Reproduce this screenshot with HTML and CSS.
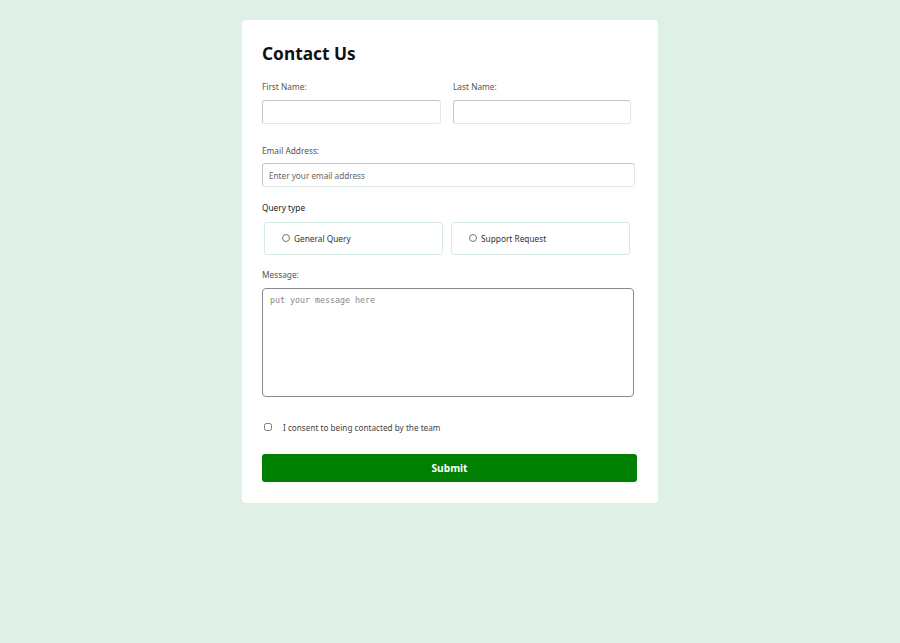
FILE: index.html
```html
<!DOCTYPE html>
<html lang="en">
<head>
    <meta charset="UTF-8">
    <meta name="viewport" content="width=device-width, initial-scale=1.0">
    <title>Contact Us</title>
    <link rel="stylesheet" href="styles.css">
</head>
<body>
    <form class="card" action="#" method="POST">
        <h1>Contact Us</h1>
        <div class="name-row">
            <div class="field">
                <label for="first_name">First Name:</label>
                <input type="text" id="first_name" name="first_name">
            </div>
            <div class="field last">
                <label for="last_name">Last Name:</label>
                <input type="text" id="last_name" name="last_name">
            </div>
        </div>
        <div class="field email">
            <label for="email">Email Address:</label>
            <input type="email" id="email" name="email" placeholder="Enter your email address">
        </div>
        <p class="query-title">Query type</p>
        <div class="query-row">
            <label class="query-box"><input type="radio" name="query"> General Query</label>
            <label class="query-box"><input type="radio" name="query"> Support Request</label>
        </div>
        <div class="field message">
            <label for="message">Message:</label>
            <textarea id="message" name="message" placeholder="put your message here"></textarea>
        </div>
        <label class="consent"><input type="checkbox" name="consent"> I consent to being contacted by the team</label>
        <input type="submit" value="Submit">
    </form>
</body>
</html>
```

FILE: styles.css
```css
body {
    font-family: "Noto Sans", "Open Sans", sans-serif;
    margin: 0;
    padding: 20px 0;
    background-color: #dff0e6;
    color: #222;
}
.card {
    width: 375px;
    margin: 0 auto;
    background-color: #fff;
    padding: 22px 21px 21px 20px;
    border-radius: 4px;
    display: flex;
    flex-direction: column;
}
h1 {
    margin: 0;
    font-size: 17.3px;
    line-height: 24px;
    color: #111;
}
.name-row {
    display: flex;
    gap: 12px;
    margin-top: 14px;
}
.field {
    display: flex;
    flex-direction: column;
}
.field label {
    font-size: 8.3px;
    line-height: 13px;
    color: #555;
    margin-bottom: 7px;
}
.name-row .field {
    width: 179px;
}
.name-row .field.last {
    width: 178px;
}
input[type="text"], input[type="email"] {
    box-sizing: border-box;
    width: 100%;
    height: 24px;
    margin: 0;
    padding: 0 6px;
    border: 1px solid #dfe9e5;
    border-top-color: #c4c4c4;
    border-left-color: #c8c8c8;
    border-radius: 3px;
    font-family: inherit;
    font-size: 8.2px;
}
input::placeholder {
    color: #666;
}
.email {
    margin-top: 20px;
}
.email label {
    margin-bottom: 6px;
}
.email input {
    width: 373px;
}
.query-title {
    margin: 14px 0 0;
    font-size: 8.3px;
    line-height: 13px;
}
.query-row {
    display: flex;
    gap: 8px;
    margin-top: 8px;
    padding-left: 2px;
}
.query-box {
    box-sizing: border-box;
    width: 179px;
    height: 33px;
    border: 1px solid #d6ebe3;
    border-radius: 3px;
    display: flex;
    align-items: center;
    padding-left: 17px;
    font-size: 8.3px;
    color: #333;
}
.query-box input {
    width: 8px;
    height: 8px;
    margin: 0 4px 2px 0;
}
.message {
    margin-top: 13px;
}
textarea {
    box-sizing: border-box;
    width: 372px;
    height: 109px;
    margin: 0;
    padding: 6px 7px;
    border: 1px solid #888;
    border-radius: 4px;
    font-family: "DejaVu Sans Mono", monospace;
    font-size: 8.3px;
    resize: none;
}
textarea::placeholder {
    color: #888;
}
.consent {
    display: flex;
    align-items: center;
    margin-top: 24px;
    padding-left: 2px;
    height: 12px;
    font-size: 8.2px;
    color: #444;
}
.consent input {
    width: 8px;
    height: 8px;
    margin: 0 11px 1px 0;
}
input[type="submit"] {
    width: 100%;
    height: 28px;
    margin-top: 21px;
    border: none;
    border-radius: 3px;
    background-color: #008000;
    color: white;
    font-family: inherit;
    font-weight: bold;
    font-size: 10.2px;
    cursor: pointer;
}
```
